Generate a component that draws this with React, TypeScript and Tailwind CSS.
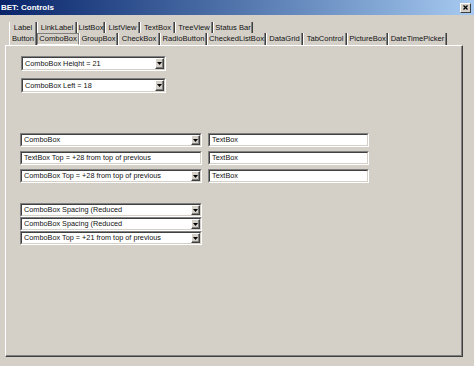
import React from 'react';

const tabsTop = [
  { label: 'Label', w: 'w-[28px]' },
  { label: 'LinkLabel', w: 'w-[40px]' },
  { label: 'ListBox', w: 'w-[28px]' },
  { label: 'ListView', w: 'w-[35px]' },
  { label: 'TextBox', w: 'w-[35px]' },
  { label: 'TreeView', w: 'w-[38px]' },
  { label: 'Status Bar', w: 'w-[40px]' },
];

const tabsBottom = [
  { label: 'Button', w: 'w-[28px]' },
  { label: 'ComboBox', w: 'w-[42px]', active: true },
  { label: 'GroupBox', w: 'w-[39px]' },
  { label: 'CheckBox', w: 'w-[42px]' },
  { label: 'RadioButton', w: 'w-[47px]' },
  { label: 'CheckedListBox', w: 'w-[59px]' },
  { label: 'DataGrid', w: 'w-[37px]' },
  { label: 'TabControl', w: 'w-[44px]' },
  { label: 'PictureBox', w: 'w-[41px]' },
  { label: 'DateTimePicker', w: 'w-[59px]' },
];

function Tab({ label, w, active }: { label: string; w: string; active?: boolean }) {
  return (
    <div
      className={
        active
          ? `${w} h-full flex items-center justify-center border border-t-[#808080] border-l-[#808080] border-r-[#808080] border-b-white bg-[#d4d0c8]`
          : `${w} h-full flex items-center justify-center border-l border-l-white border-r border-r-[#404040] shadow-[inset_-1px_0_0_#808080]`
      }
    >
      <span className="text-[7.6px] leading-none text-[#111] whitespace-nowrap">{label}</span>
    </div>
  );
}

function Sunken({ className, children }: { className: string; children: React.ReactNode }) {
  return (
    <div className={`${className} border border-t-[#808080] border-l-[#808080] border-r-white border-b-white`}>
      <div className="h-full w-full border border-t-[#404040] border-l-[#404040] border-r-[#d4d0c8] border-b-[#d4d0c8] bg-white flex items-center">
        {children}
      </div>
    </div>
  );
}

function Combo({ text, className }: { text: string; className: string }) {
  return (
    <Sunken className={className}>
      <span className="flex-1 pl-[2px] text-[7.3px] leading-none text-[#111] whitespace-nowrap overflow-hidden">{text}</span>
      <div className="w-[9px] h-full bg-[#d4d0c8] border border-t-white border-l-white border-r-[#404040] border-b-[#404040] shadow-[inset_-1px_-1px_0_#808080] flex items-center justify-center">
        <svg width="5" height="3" viewBox="0 0 5 3">
          <path d="M0 0h5L2.5 3z" fill="#000" />
        </svg>
      </div>
    </Sunken>
  );
}

function TextBox({ text, className }: { text: string; className: string }) {
  return (
    <Sunken className={className}>
      <span className="pl-[2px] text-[7.3px] leading-none text-[#111] whitespace-nowrap">{text}</span>
    </Sunken>
  );
}

export default function App() {
  return (
    <div className="w-[474px] h-[366px] bg-[#d4d0c8] overflow-hidden font-['Liberation_Sans',Arial,sans-serif] flex flex-col">
      <div className="h-[15px] flex items-center justify-between bg-gradient-to-r from-[#0a246a] to-[#a6caf0] pl-[1px] pr-[3px]">
        <span className="text-white font-bold text-[8px] leading-none">BET: Controls</span>
        <div className="w-[11px] h-[10px] bg-[#d4d0c8] border border-t-white border-l-white border-r-[#404040] border-b-[#404040] flex items-center justify-center">
          <svg width="5" height="5" viewBox="0 0 5 5">
            <path d="M0.5 0.5L4.5 4.5M4.5 0.5L0.5 4.5" stroke="#000" strokeWidth="1.3" />
          </svg>
        </div>
      </div>

      <div className="pl-[9px] mt-[7px]">
        <div className="flex h-[11px]">
          {tabsTop.map((t) => (
            <Tab key={t.label} {...t} />
          ))}
        </div>
        <div className="flex h-[12px]">
          {tabsBottom.map((t) => (
            <Tab key={t.label} {...t} />
          ))}
        </div>
      </div>

      <div className="ml-[5px] w-[458px] h-[312px] border border-t-white border-l-white border-r-[#404040] border-b-[#404040] shadow-[inset_-1px_-1px_0_#808080] pl-[15px] pt-[10px] flex flex-col">
        <Combo text="ComboBox Height = 21" className="w-[145px] h-[15px]" />
        <Combo text="ComboBox Left = 18" className="w-[145px] h-[15px] mt-[7px]" />

        <div className="mt-[40px] flex flex-col gap-[4px] -ml-[1px]">
          <div className="flex gap-[6px]">
            <Combo text="ComboBox" className="w-[182px] h-[14px]" />
            <TextBox text="TextBox" className="w-[161px] h-[14px]" />
          </div>
          <div className="flex gap-[6px]">
            <TextBox text="TextBox Top = +28 from top of previous" className="w-[182px] h-[14px]" />
            <TextBox text="TextBox" className="w-[161px] h-[14px]" />
          </div>
          <div className="flex gap-[6px]">
            <Combo text="ComboBox Top = +28 from top of previous" className="w-[182px] h-[14px]" />
            <TextBox text="TextBox" className="w-[161px] h-[14px]" />
          </div>
        </div>

        <div className="mt-[20px] flex flex-col -ml-[1px]">
          <Combo text="ComboBox Spacing (Reduced" className="w-[182px] h-[14px]" />
          <Combo text="ComboBox Spacing (Reduced" className="w-[182px] h-[14px]" />
          <Combo text="ComboBox Top = +21 from top of previous" className="w-[182px] h-[14px]" />
        </div>
      </div>
    </div>
  );
}
